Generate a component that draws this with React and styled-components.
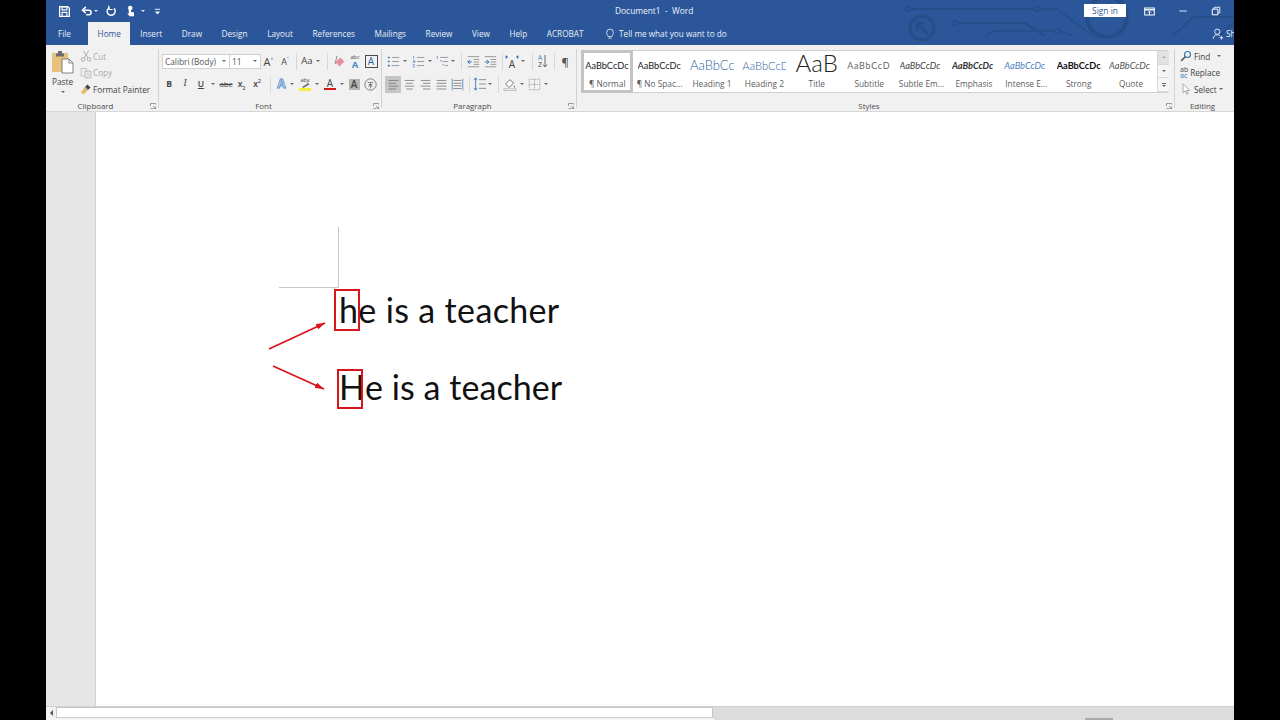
import React from 'react';
import styled, { createGlobalStyle } from 'styled-components';

const GlobalStyle = createGlobalStyle`
  html, body { margin: 0; padding: 0; background: #000; }
  body { font-family: "Open Sans", "Noto Sans", sans-serif; overflow: hidden; }
`;

const Window = styled.div`
  width: 1188px;
  height: 720px;
  margin-left: 46px;
  display: flex;
  flex-direction: column;
  overflow: hidden;
  background: #fff;
`;

// Header
const Header = styled.header`
  position: relative;
  flex: 0 0 45px;
  background: #2b579a;
  color: #eef2f8;
`;

const Circuit = styled.svg`
  position: absolute;
  right: 0;
  top: 0;
  width: 334px;
  height: 46px;
  pointer-events: none;
`;

const TitleBar = styled.div`
  position: relative;
  height: 22px;
  display: flex;
  align-items: center;
`;

const Qat = styled.div`
  flex: 0 0 569px;
  display: flex;
  align-items: center;
  padding-left: 12px;
  box-sizing: border-box;
`;

const DocTitle = styled.div`
  font-size: 8.4px;
  margin-top: -2px;
  white-space: pre;
`;

const WinControls = styled.div`
  margin-left: auto;
  display: flex;
  align-items: center;
  padding-right: 2px;
`;

const SignIn = styled.div`
  width: 42px;
  height: 13px;
  margin-top: -1px;
  margin-right: 7px;
  background: #fff;
  color: #2b579a;
  font-size: 8.4px;
  line-height: 13px;
  text-align: center;
`;

const TabBar = styled.nav`
  position: relative;
  height: 23px;
  display: flex;
  align-items: stretch;
`;

const Tab = styled.div`
  padding: 0 9.8px;
  box-sizing: border-box;
  display: flex;
  align-items: center;
  justify-content: center;
  font-size: 8.2px;
  white-space: nowrap;
  background: ${p => (p.$active ? '#f1f1f1' : 'transparent')};
  color: ${p => (p.$active ? '#2b579a' : '#e8eef7')};
`;

const FileTab = styled(Tab)`
  flex: 0 0 42px;
  padding: 0 0 0 12px;
  justify-content: flex-start;
`;

const HomeTab = styled(Tab)`
  padding: 0 9.6px;
`;

const TellMe = styled(Tab)`
  margin-left: 1px;
  gap: 3px;
`;

const Share = styled.div`
  margin-left: auto;
  margin-right: -14px;
  display: flex;
  align-items: center;
  gap: 2px;
  font-size: 8.2px;
`;

// Ribbon
const Ribbon = styled.section`
  flex: 0 0 67px;
  display: flex;
  background: #f1f1f1;
  border-bottom: 1px solid #d6d6d6;
  box-sizing: border-box;
  color: #444;
`;

const Group = styled.div`
  flex: 0 0 ${p => p.$w}px;
  box-sizing: border-box;
  display: flex;
  flex-direction: column;
  position: relative;
  &::after {
    content: '';
    position: absolute;
    right: 0;
    top: 4px;
    bottom: 3px;
    width: 1px;
    background: ${p => (p.$last ? 'transparent' : '#d2d2d2')};
  }
`;

const GroupBody = styled.div`
  height: 55px;
  box-sizing: border-box;
  padding: ${p => p.$pad || '8.5px 0 0 3px'};
  display: flex;
  flex-direction: ${p => p.$dir || 'column'};
`;

const GroupFoot = styled.div`
  height: 11px;
  position: relative;
  font-size: 7.9px;
  line-height: 13px;
  text-align: center;
  padding-right: ${p => (p.$noLauncher ? 4 : 14)}px;
  color: #4c4c4c;
`;

const Launcher = styled.svg`
  position: absolute;
  right: 3px;
  top: 3px;
  width: 6px;
  height: 6px;
`;

const ToolRow = styled.div`
  display: flex;
  align-items: center;
  height: 15px;
  margin-bottom: 8px;
`;

const Slot = styled.div`
  flex: 0 0 ${p => p.$w}px;
  height: ${p => (p.$on ? 17 : 15)}px;
  display: flex;
  align-items: center;
  justify-content: center;
  position: relative;
  background: ${p => (p.$on ? '#c6c6c6' : 'transparent')};
`;

const Divider = styled.div`
  flex: 0 0 ${p => p.$w}px;
  height: 17px;
  display: flex;
  justify-content: center;
  &::before {
    content: '';
    width: 1px;
    background: #d8d8d8;
  }
`;

const Caret = styled.span`
  display: block;
  width: 0;
  height: 0;
  border-left: 2px solid transparent;
  border-right: 2px solid transparent;
  border-top: 2px solid #666;
`;

const CaretUp = styled(Caret)`
  border-top: 0;
  border-bottom: 2px solid #aaa;
`;

const QatCaret = styled(Caret)`
  border-top-color: #e8eef7;
`;

const Glyph = styled.span`
  font-family: ${p => (p.$serif ? '"Liberation Serif", serif' : '"Open Sans", sans-serif')};
  font-size: ${p => p.$size || 9}px;
  font-weight: ${p => p.$weight || 400};
  font-style: ${p => (p.$italic ? 'italic' : 'normal')};
  text-decoration: ${p => p.$deco || 'none'};
  color: ${p => p.$color || '#444'};
  line-height: 1;
  white-space: nowrap;
`;

const GlyphStack = styled.span`
  display: flex;
  flex-direction: column;
  align-items: ${p => p.$align || 'center'};
  line-height: 1;
`;

const TinyLine = styled(Glyph)`
  height: ${p => p.$h || 6}px;
  line-height: ${p => p.$h || 6}px;
`;

const SupMark = styled.span`
  font-size: 5px;
  vertical-align: super;
  line-height: 0;
`;

const SubMark = styled.span`
  font-size: 5px;
  vertical-align: sub;
  line-height: 0;
`;

const OutlineA = styled(Glyph)`
  color: #cfe0f5;
  -webkit-text-stroke: 0.8px #5b8fd2;
  font-weight: 700;
`;

const BarA = styled.span`
  display: flex;
  flex-direction: column;
  align-items: center;
  line-height: 1;
  font-size: ${p => p.$size || 10}px;
  color: #444;
  &::after {
    content: '';
    width: ${p => p.$bar || 12}px;
    height: 2.5px;
    background: ${p => p.$color};
  }
`;

const ShadedA = styled.span`
  width: 11px;
  height: 11px;
  background: #b4b4b4;
  font-size: 10px;
  font-weight: 600;
  line-height: 11px;
  text-align: center;
  color: #444;
`;

const BoxedA = styled.span`
  width: 11px;
  height: 11px;
  border: 1px solid #4a4a4a;
  font-size: 10px;
  line-height: 11px;
  text-align: center;
  color: #2b6aa8;
`;

const FontBox = styled.div`
  flex: 0 0 ${p => p.$w}px;
  box-sizing: border-box;
  height: 15px;
  background: #fff;
  border: 1px solid #d0d0d0;
  margin-right: -1px;
  display: flex;
  align-items: center;
  justify-content: space-between;
  padding: 0 3px 0 2px;
  font-size: 8.4px;
  letter-spacing: -0.05px;
  white-space: nowrap;
  color: #555;
`;

// Clipboard
const PasteCol = styled.div`
  flex: 0 0 31px;
  margin: 2px 0 0 1px;
  display: flex;
  flex-direction: column;
  align-items: center;
  font-size: 8.3px;
  color: #444;
`;

const PasteLabel = styled.div`
  margin-top: 2px;
  line-height: 12px;
`;

const PasteCaret = styled(Caret)`
  margin-top: 3px;
`;

const ActionStack = styled.div`
  display: flex;
  flex-direction: column;
  padding-left: ${p => p.$left || 0}px;
`;

const Action = styled.div`
  height: 16.5px;
  display: flex;
  align-items: center;
  gap: ${p => p.$gap || 1}px;
  font-size: 8.2px;
  white-space: nowrap;
  color: ${p => (p.$off ? '#aaa' : '#444')};
`;

// Styles gallery
const Gallery = styled.div`
  display: flex;
  height: 43px;
  box-sizing: border-box;
  border: 1px solid #cfcfcf;
  border-left: 0;
  background: #fff;
  width: 587px;
`;

const Tiles = styled.div`
  flex: 1;
  display: flex;
`;

const Tile = styled.div`
  flex: 0 0 52.4px;
  box-sizing: border-box;
  display: flex;
  flex-direction: column;
  align-items: center;
  border: ${p => (p.$selected ? '3px solid #c4c4c4' : 'none')};
  margin-top: ${p => (p.$selected ? -1 : 0)}px;
  margin-bottom: ${p => (p.$selected ? -1 : 0)}px;
  padding-top: ${p => (p.$selected ? 0 : 2)}px;
`;

const Preview = styled.div`
  width: 44px;
  height: 24px;
  box-sizing: border-box;
  padding-bottom: ${p => p.$lift || 0}px;
  overflow: hidden;
  display: flex;
  align-items: center;
  justify-content: ${p => (p.$center ? 'center' : 'flex-start')};
  white-space: nowrap;
  font-family: Lato, "Liberation Sans", sans-serif;
  font-size: ${p => p.$size || 9.2}px;
  font-weight: ${p => p.$weight || 400};
  font-style: ${p => (p.$italic ? 'italic' : 'normal')};
  letter-spacing: ${p => p.$spacing || 0}px;
  color: ${p => p.$color || '#222'};
`;

const TileLabel = styled.div`
  margin-top: 1px;
  font-size: 8.3px;
  line-height: 12px;
  color: #5c5c5c;
  white-space: nowrap;
`;

const Scroller = styled.div`
  flex: 0 0 11px;
  display: flex;
  flex-direction: column;
  border-left: 1px solid #d8d8d8;
  background: #f3f3f3;
`;

const ScrollBtn = styled.div`
  flex: 1;
  display: flex;
  align-items: center;
  justify-content: center;
  flex-direction: column;
  gap: 1px;
  background: ${p => (p.$off ? '#e2e2e2' : '#f6f6f6')};
  border-bottom: 1px solid #d8d8d8;
`;

const ScrollDash = styled.span`
  width: 4px;
  height: 1px;
  background: #666;
`;

// Document
const Workspace = styled.main`
  flex: 1;
  display: flex;
  min-height: 0;
`;

const Gutter = styled.div`
  flex: 0 0 49px;
  background: #e6e6e6;
  border-right: 1px solid #d4d4d4;
`;

const Page = styled.div`
  position: relative;
  flex: 1;
  background: #fff;
  padding-top: 115px;
`;

const CropMark = styled.div`
  width: 60px;
  height: 61px;
  margin-left: 183px;
  box-sizing: border-box;
  border-right: 1px solid #c8c8c8;
  border-bottom: 1px solid #c8c8c8;
`;

const Lines = styled.div`
  margin-left: 243px;
  display: flex;
  flex-direction: column;
  gap: 34px;
`;

const Line = styled.div`
  height: 43px;
  line-height: 43px;
  font-family: Lato, "Liberation Sans", sans-serif;
  font-size: 34px;
  letter-spacing: ${p => p.$track}px;
  color: #111;
  white-space: pre;
`;

const Marked = styled.span`
  position: relative;
  &::after {
    content: '';
    position: absolute;
    left: ${p => p.$left}px;
    top: ${p => p.$top}px;
    width: 26px;
    height: ${p => p.$h}px;
    box-sizing: border-box;
    border: 2px solid #d8141c;
  }
`;

const Arrows = styled.svg`
  position: absolute;
  left: 0;
  top: 0;
  width: 300px;
  height: 300px;
  overflow: visible;
`;

// Bottom
const HScroll = styled.div`
  flex: 0 0 12px;
  display: flex;
  background: #dcdcdc;
  border-top: 1px solid #d0d0d0;
  box-sizing: border-box;
`;

const LeftBtn = styled.div`
  flex: 0 0 10px;
  background: #f1f1f1;
  display: flex;
  align-items: center;
  justify-content: center;
`;

const LeftTri = styled.span`
  width: 0;
  height: 0;
  border-top: 3px solid transparent;
  border-bottom: 3px solid transparent;
  border-right: 3px solid #555;
`;

const Thumb = styled.div`
  flex: 0 0 657px;
  box-sizing: border-box;
  background: #fff;
  border: 1px solid #c8c8c8;
`;

const StatusEdge = styled.div`
  flex: 0 0 2px;
  display: flex;
  background: #dcdcdc;
`;

const EdgeLight = styled.div`
  flex: 0 0 668px;
  background: #f4f4f4;
`;

const EdgeBlob = styled.div`
  flex: 0 0 28px;
  margin-left: 371px;
  background: #aaa;
`;

const Ico = ({ s = 14, w, h, children, vb = '0 0 16 16' }) => (
  <svg width={w || s} height={h || s} viewBox={vb} fill="none" style={{ display: 'block', flex: 'none' }}>
    {children}
  </svg>
);

const SaveIcon = () => (
  <Ico s={13}>
    <path d="M2 2h10l2 2v10H2z" stroke="#fff" strokeWidth="1.6" />
    <path d="M5 2.500h6v3.500H5zM5 14V9h6v5" stroke="#fff" strokeWidth="1.4" />
  </Ico>
);
const UndoIcon = () => (
  <Ico s={12}>
    <path d="M3 7h7.500a3 3 0 0 1 0 6H7" stroke="#fff" strokeWidth="2" />
    <path d="M6.500 2.500 2 7l4.500 4" stroke="#fff" strokeWidth="2" />
  </Ico>
);
const RedoIcon = () => (
  <Ico s={12}>
    <path d="M6 3.400A5.400 5.400 0 1 0 12 4.500" stroke="#fff" strokeWidth="1.9" />
    <path d="M5 1v5h5" stroke="#fff" strokeWidth="1.6" />
  </Ico>
);
const TouchIcon = () => (
  <Ico s={12}>
    <circle cx="7" cy="4" r="3" fill="#fff" />
    <path d="M5 6h3v3l4 1v5H6l-3-4 2 .5z" fill="#fff" />
  </Ico>
);
const CustomizeIcon = () => (
  <Ico s={7} vb="0 0 8 8">
    <path d="M1 1.500h6" stroke="#fff" />
    <path d="M1 4h6L4 7.500z" fill="#fff" />
  </Ico>
);
const RibbonDisplayIcon = () => (
  <Ico s={11}>
    <path d="M1 3h14v10H1z" stroke="#fff" strokeWidth="1.5" />
    <path d="M1 5.500h14" stroke="#fff" strokeWidth="2" />
    <path d="M8 13V8M5.800 9.600 8 7.400l2.200 2.200" stroke="#fff" strokeWidth="1.4" />
  </Ico>
);
const MinimizeIcon = () => (
  <Ico s={10}>
    <path d="M2 8h12" stroke="#dfe7f3" strokeWidth="1.6" />
  </Ico>
);
const RestoreIcon = () => (
  <Ico s={10}>
    <path d="M2 5h9v9H2z" stroke="#fff" strokeWidth="1.6" />
    <path d="M5 5V2h9v9h-3" stroke="#fff" strokeWidth="1.4" />
  </Ico>
);
const BulbIcon = () => (
  <Ico s={12}>
    <path d="M5.500 11.500C5 9.500 3.500 8.500 3.500 6a4.500 4.500 0 0 1 9 0c0 2.500-1.500 3.500-2 5.500z" stroke="#fff" strokeWidth="1" />
    <path d="M6 13.500h4" stroke="#fff" strokeWidth="1" />
  </Ico>
);
const PersonIcon = () => (
  <Ico s={12}>
    <circle cx="7" cy="5" r="3.500" stroke="#fff" strokeWidth="1.100" />
    <path d="M1.500 14.500c.5-3.500 2.500-5.500 5.500-5.500 1.500 0 2.500.4 3.500 1.300M12.500 10.500v5M10 13h5" stroke="#fff" strokeWidth="1.100" />
  </Ico>
);

const PasteIcon = () => (
  <Ico w={24} h={24} vb="0 0 24 24">
    <rect x="1" y="3" width="16" height="19" fill="#e7c27d" />
    <path d="M5 3.500h8v3H5z" fill="#6b6b6b" />
    <rect x="7" y="1" width="4" height="3" fill="#6b6b6b" />
    <path d="M11 9h7l4 4v10H11z" fill="#fff" stroke="#666" strokeWidth=".8" />
    <path d="M18 9v4h4" stroke="#666" strokeWidth=".8" />
  </Ico>
);
const ScissorsIcon = () => (
  <Ico s={12}>
    <circle cx="4" cy="12.500" r="2.400" stroke="#aaa" strokeWidth="1.200" />
    <circle cx="12" cy="12.500" r="2.400" stroke="#aaa" strokeWidth="1.200" />
    <path d="M5.500 10.500 11.500 1M10.500 10.500 4.500 1" stroke="#aaa" strokeWidth="1.200" />
  </Ico>
);
const CopyIcon = () => (
  <Ico s={12}>
    <path d="M1.500 2h7v10h-7z" stroke="#b4b4b4" strokeWidth="1" />
    <path d="M6.500 5.500h8v9h-8z" fill="#f1f1f1" stroke="#aaa" strokeWidth="1" />
    <path d="M8.500 8h4M8.500 10h4M8.500 12h4" stroke="#bbb" strokeWidth=".8" />
  </Ico>
);
const BrushIcon = () => (
  <Ico s={12}>
    <path d="M1 13 6 6l4 4-5 5z" fill="#e9b96a" />
    <path d="m7 5 3-3 4 4-3 3z" fill="#444" />
    <path d="m6 6 1-1 4 4-1 1z" fill="#888" />
  </Ico>
);
const EraserIcon = () => (
  <Ico s={13}>
    <path d="m3 9 6-6 5 5-6 6z" fill="#ea8fa2" />
    <path d="M5 1 2.500 11" stroke="#777" strokeWidth="1" />
  </Ico>
);
const AlertCircle = () => (
  <Ico s={13}>
    <circle cx="8" cy="8" r="7" stroke="#666" strokeWidth="1" />
    <path d="M4.500 5.500h7M5.500 8h5M8 5.500V13M5.500 11 8 8l2.500 3" stroke="#666" strokeWidth=".9" />
  </Ico>
);
const HighlightMark = () => (
  <Ico w={14} h={8} vb="0 0 14 8">
    <path d="m4 4 6-4 1.500 1.500L5.500 5z" fill="#777" />
    <rect x="1" y="5" width="12" height="3" fill="#f5ee3a" />
  </Ico>
);
const Lines4 = ({ spec, color = '#777' }) => (
  <Ico s={13}>
    {spec.map(([x1, x2, y], i) => (
      <path key={i} d={`M${x1} ${y}H${x2}`} stroke={color} strokeWidth="1" />
    ))}
  </Ico>
);
const BulletsIcon = () => (
  <Ico s={13}>
    <path d="M6 3h9M6 8h9M6 13h9" stroke="#888" />
    <path d="M1 2h2.500v2H1zM1 7h2.500v2H1zM1 12h2.500v2H1z" fill="#4a7fbf" />
  </Ico>
);
const NumberedIcon = () => (
  <Ico s={13}>
    <path d="M6 3h9M6 8h9M6 13h9" stroke="#888" />
    <path d="M2 1.500v3M1 7h2.500v2H1M1 12h2.500M1 14.500h2.500" stroke="#4a7fbf" />
  </Ico>
);
const MultiIcon = () => (
  <Ico s={13}>
    <path d="M5 3h10M8 8h7M11 13h4" stroke="#888" />
    <path d="M1.500 1.500v3M5 7h2M8 12h2" stroke="#4a7fbf" />
  </Ico>
);
const IndentIcon = ({ flip }) => (
  <Ico s={13}>
    <path d="M1 2h14M8 5.500h7M8 8.500h7M8 11.500h7M1 14.500h14" stroke="#888" />
    <path d={flip ? 'M1 8.500h5M3.500 6 6 8.500 3.500 11' : 'M6 8.500H1M3.500 6 1 8.500 3.500 11'} stroke="#2d6fb7" strokeWidth="1.200" />
  </Ico>
);
const SparkMarks = () => (
  <Ico w={16} h={6} vb="0 0 16 6">
    <path d="M1 3h3M2.500 1.500v3M12 3h3M13.500 1.500v3" stroke="#3f76c0" />
  </Ico>
);
const DownArrow = () => (
  <Ico w={6} h={14} vb="0 0 6 14">
    <path d="M3 1v12M.8 10.500 3 13l2.200-2.500" stroke="#666" strokeWidth="1" />
  </Ico>
);
const DistributeIcon = () => (
  <Ico s={13}>
    <path d="M1.500 1v14M14.500 1v14" stroke="#4a7fbf" />
    <path d="M3 3h10M3 6.500h10M3 9.500h10M3 13h10" stroke="#777" />
  </Ico>
);
const SpacingIcon = () => (
  <Ico s={14}>
    <path d="M7 3h8M7 8h8M7 13h8" stroke="#888" />
    <path d="M3 1v14M1 3.500 3 1l2 2.500M1 12.500 3 15l2-2.500" stroke="#3f76c0" />
  </Ico>
);
const ShadingIcon = () => (
  <Ico s={14}>
    <path d="m3 8 5-5 4 4-5 5z" fill="#fff" stroke="#666" />
    <path d="M13 9.500c1 1.500 1 2.500 0 2.500s-1-1 0-2.500z" fill="#3f76c0" />
    <path d="M1 13.500h14v2H1z" fill="#fff" stroke="#999" strokeWidth=".7" />
  </Ico>
);
const BordersIcon = () => (
  <Ico s={13}>
    <path d="M1.500 1.500h13v13h-13zM8 1.500v13M1.500 8h13" stroke="#999" strokeDasharray="1.400 1" />
  </Ico>
);
const FindIcon = () => (
  <Ico s={12}>
    <circle cx="10" cy="6" r="4" stroke="#3a6fa8" strokeWidth="1.500" />
    <path d="M7 9 1.500 14.500" stroke="#555" strokeWidth="2" />
  </Ico>
);
const SelectIcon = () => (
  <Ico s={12}>
    <path d="M4 1v12l3-2.500 2 4.500 1.800-.8-2-4.200H13z" fill="#fff" stroke="#888" strokeWidth=".9" />
  </Ico>
);
const LauncherIcon = () => (
  <Launcher viewBox="0 0 6 6">
    <path d="M.5 3V.5h5v1M.5 5.500H3M5.500 5.500 3 3M5.500 3.500v2h-2" stroke="#777" strokeWidth=".7" fill="none" />
  </Launcher>
);

const Circuitry = () => (
  <Circuit viewBox="900 0 334 46" fill="none" stroke="#264d89" strokeWidth="1.500">
    <circle cx="908" cy="9" r="2.500" />
    <path d="M911 9h123" strokeWidth="2" />
    <circle cx="1037" cy="9" r="2.500" />
    <path d="M1040 9h17l36 27" />
    <circle cx="955" cy="23" r="2.500" />
    <path d="M958 23h67l20 13" strokeWidth="2" />
    <path d="m985 36 8-5h61" />
    <circle cx="1057" cy="31" r="2.500" />
    <path d="m1060 31 13 5" />
    <circle cx="922" cy="28" r="12" strokeWidth="3" />
    <path d="M928 34 917 23M917 31v-8h8" strokeWidth="3" />
    <circle cx="1107" cy="17" r="20" strokeWidth="4" />
    <path d="m1173 36 20-19h40M1220 36l13-13" strokeWidth="2" />
  </Circuit>
);

const tabs = ['Insert', 'Draw', 'Design', 'Layout', 'References', 'Mailings', 'Review', 'View', 'Help', 'ACROBAT'];

const galleryItems = [
  { name: '¶ Normal', text: 'AaBbCcDc', selected: true, color: '#222' },
  { name: '¶ No Spac...', text: 'AaBbCcDc', color: '#222' },
  { name: 'Heading 1', text: 'AaBbCc', color: '#2f5f9e', size: 13, weight: 300 },
  { name: 'Heading 2', text: 'AaBbCcD', color: '#2f5f9e', size: 11.2, weight: 300 },
  { name: 'Title', text: 'AaB', color: '#222', size: 24, weight: 300, center: true, lift: 5 },
  { name: 'Subtitle', text: 'AaBbCcD', color: '#666', size: 9, spacing: 0.7 },
  { name: 'Subtle Em...', text: 'AaBbCcDc', color: '#444', italic: true },
  { name: 'Emphasis', text: 'AaBbCcDc', color: '#333', italic: true, weight: 700 },
  { name: 'Intense E...', text: 'AaBbCcDc', color: '#4a7fbf', italic: true },
  { name: 'Strong', text: 'AaBbCcDc', color: '#111', weight: 700 },
  { name: 'Quote', text: 'AaBbCcDc', color: '#555', italic: true },
];

const App = () => (
  <>
    <GlobalStyle />
    <Window>
      <Header>
        <Circuitry />
        <TitleBar>
          <Qat>
            <SaveIcon />
            <Slot $w={10} />
            <UndoIcon />
            <Slot $w={6}><QatCaret /></Slot>
            <Slot $w={6} />
            <RedoIcon />
            <Slot $w={8} />
            <TouchIcon />
            <Slot $w={12}><QatCaret /></Slot>
            <Slot $w={5} />
            <CustomizeIcon />
          </Qat>
          <DocTitle>Document1  -  Word</DocTitle>
          <WinControls>
            <SignIn>Sign in</SignIn>
            <Slot $w={33}><RibbonDisplayIcon /></Slot>
            <Slot $w={33}><MinimizeIcon /></Slot>
            <Slot $w={33}><RestoreIcon /></Slot>
          </WinControls>
        </TitleBar>
        <TabBar>
          <FileTab>File</FileTab>
          <HomeTab $active>Home</HomeTab>
          {tabs.map(t => <Tab key={t}>{t}</Tab>)}
          <TellMe><BulbIcon />Tell me what you want to do</TellMe>
          <Share><PersonIcon />Share</Share>
        </TabBar>
      </Header>

      <Ribbon>
        <Group $w={113}>
          <GroupBody $dir="row" $pad="3px 0 0 0">
            <PasteCol>
              <PasteIcon />
              <PasteLabel>Paste</PasteLabel>
              <PasteCaret />
            </PasteCol>
            <ActionStack $left={2}>
              <Action $off><ScissorsIcon />Cut</Action>
              <Action $off><CopyIcon />Copy</Action>
              <Action><BrushIcon />Format Painter</Action>
            </ActionStack>
          </GroupBody>
          <GroupFoot>Clipboard<LauncherIcon /></GroupFoot>
        </Group>

        <Group $w={223}>
          <GroupBody>
            <ToolRow>
              <FontBox $w={68}>Calibri (Body)<Caret /></FontBox>
              <FontBox $w={32}>11<Caret /></FontBox>
              <Slot $w={17}><Glyph $size={11}>A<SupMark>^</SupMark></Glyph></Slot>
              <Slot $w={16}><Glyph $size={9}>A<SupMark>ˇ</SupMark></Glyph></Slot>
              <Divider $w={6} />
              <Slot $w={16}><Glyph $size={9.5}>Aa</Glyph></Slot>
              <Slot $w={6}><Caret /></Slot>
              <Divider $w={12} />
              <Slot $w={11}><EraserIcon /></Slot>
              <Slot $w={18}>
                <GlyphStack>
                  <TinyLine $size={5.5} $h={6}>abc</TinyLine>
                  <TinyLine $size={9.5} $h={9} $weight={700} $color="#4a86c8">A</TinyLine>
                </GlyphStack>
              </Slot>
              <Slot $w={14}><BoxedA>A</BoxedA></Slot>
            </ToolRow>
            <ToolRow>
              <Slot $w={14}><Glyph $weight={700} $size={8.5}>B</Glyph></Slot>
              <Slot $w={18}><Glyph $italic $serif $size={9.5}>I</Glyph></Slot>
              <Slot $w={14}><Glyph $deco="underline" $size={8.5} $weight={600}>U</Glyph></Slot>
              <Slot $w={10}><Caret /></Slot>
              <Slot $w={16}><Glyph $deco="line-through" $size={8}>abc</Glyph></Slot>
              <Slot $w={15}><Glyph $size={8.5} $weight={600}>x<SubMark>2</SubMark></Glyph></Slot>
              <Slot $w={16}><Glyph $size={8.5} $weight={600}>x<SupMark>2</SupMark></Glyph></Slot>
              <Divider $w={10} />
              <Slot $w={13}><OutlineA $size={12}>A</OutlineA></Slot>
              <Slot $w={8}><Caret /></Slot>
              <Slot $w={18}>
                <GlyphStack>
                  <TinyLine $size={5.5} $h={6}>aby</TinyLine>
                  <HighlightMark />
                </GlyphStack>
              </Slot>
              <Slot $w={6}><Caret /></Slot>
              <Slot $w={20}><BarA $color="#d11a1a">A</BarA></Slot>
              <Slot $w={4}><Caret /></Slot>
              <Slot $w={20}><ShadedA>A</ShadedA></Slot>
              <Slot $w={12}><AlertCircle /></Slot>
            </ToolRow>
          </GroupBody>
          <GroupFoot>Font<LauncherIcon /></GroupFoot>
        </Group>

        <Group $w={195}>
          <GroupBody>
            <ToolRow>
              <Slot $w={16}><BulletsIcon /></Slot>
              <Slot $w={8}><Caret /></Slot>
              <Slot $w={18}><NumberedIcon /></Slot>
              <Slot $w={6}><Caret /></Slot>
              <Slot $w={18}><MultiIcon /></Slot>
              <Slot $w={4}><Caret /></Slot>
              <Divider $w={12} />
              <Slot $w={12}><IndentIcon /></Slot>
              <Slot $w={20}><IndentIcon flip /></Slot>
              <Divider $w={4} />
              <Slot $w={16}>
                <GlyphStack>
                  <SparkMarks />
                  <TinyLine $size={10} $h={8}>A</TinyLine>
                </GlyphStack>
              </Slot>
              <Slot $w={6}><Caret /></Slot>
              <Divider $w={12} />
              <Slot $w={10}>
                <GlyphStack>
                  <TinyLine $size={6.5} $h={7} $color="#4a7fbf">A</TinyLine>
                  <TinyLine $size={6.5} $h={7}>Z</TinyLine>
                </GlyphStack>
                <DownArrow />
              </Slot>
              <Divider $w={12} />
              <Slot $w={10}><Glyph $size={11} $weight={600} $color="#555">¶</Glyph></Slot>
            </ToolRow>
            <ToolRow>
              <Slot $w={16} $on><Lines4 spec={[[2, 14, 3], [2, 11, 6.5], [2, 14, 10], [2, 11, 13.5]]} /></Slot>
              <Slot $w={16}><Lines4 spec={[[2, 14, 3], [4, 12, 6.5], [2, 14, 10], [4, 12, 13.5]]} /></Slot>
              <Slot $w={16}><Lines4 spec={[[2, 14, 3], [5, 14, 6.5], [2, 14, 10], [5, 14, 13.5]]} /></Slot>
              <Slot $w={16}><Lines4 spec={[[2, 14, 3], [2, 14, 6.5], [2, 14, 10], [2, 14, 13.5]]} /></Slot>
              <Slot $w={16}><DistributeIcon /></Slot>
              <Divider $w={8} />
              <Slot $w={14}><SpacingIcon /></Slot>
              <Slot $w={6}><Caret /></Slot>
              <Divider $w={10} />
              <Slot $w={14}><ShadingIcon /></Slot>
              <Slot $w={10}><Caret /></Slot>
              <Slot $w={14}><BordersIcon /></Slot>
              <Slot $w={10}><Caret /></Slot>
            </ToolRow>
          </GroupBody>
          <GroupFoot>Paragraph<LauncherIcon /></GroupFoot>
        </Group>

        <Group $w={598}>
          <GroupBody $pad="5px 0 0 4px">
            <Gallery>
              <Tiles>
                {galleryItems.map(it => (
                  <Tile key={it.name} $selected={it.selected}>
                    <Preview
                      $color={it.color}
                      $size={it.size}
                      $weight={it.weight}
                      $italic={it.italic}
                      $spacing={it.spacing}
                      $center={it.center}
                      $lift={it.lift}
                    >
                      {it.text}
                    </Preview>
                    <TileLabel>{it.name}</TileLabel>
                  </Tile>
                ))}
              </Tiles>
              <Scroller>
                <ScrollBtn $off><CaretUp /></ScrollBtn>
                <ScrollBtn><Caret /></ScrollBtn>
                <ScrollBtn><ScrollDash /><Caret /></ScrollBtn>
              </Scroller>
            </Gallery>
          </GroupBody>
          <GroupFoot>Styles<LauncherIcon /></GroupFoot>
        </Group>

        <Group $w={59} $last>
          <GroupBody $pad="3px 0 0 5px">
            <ActionStack>
              <Action $gap={2}><FindIcon />Find&nbsp;&nbsp;<Caret /></Action>
              <Action $gap={2}>
                <GlyphStack $align="flex-start">
                  <TinyLine $size={7} $h={6}>ab</TinyLine>
                  <TinyLine $size={7} $h={6} $color="#2d6fb7">ac</TinyLine>
                </GlyphStack>
                Replace
              </Action>
              <Action $gap={2}><SelectIcon />Select<Caret /></Action>
            </ActionStack>
          </GroupBody>
          <GroupFoot $noLauncher>Editing</GroupFoot>
        </Group>
      </Ribbon>

      <Workspace>
        <Gutter />
        <Page>
          <CropMark />
          <Lines>
            <Line $track={0.35}><Marked $left={-5} $top={0} $h={42}>h</Marked>e is a teacher</Line>
            <Line $track={0.06}><Marked $left={-2} $top={3} $h={40}>H</Marked>e is a teacher</Line>
          </Lines>
          <Arrows>
            <defs>
              <marker id="head" markerUnits="userSpaceOnUse" markerWidth="9" markerHeight="6" refX="9" refY="3" orient="auto">
                <path d="M0 0 9 3 0 6z" fill="#d8141c" />
              </marker>
            </defs>
            <path d="M173 237 229 211" stroke="#d8141c" strokeWidth="1.8" markerEnd="url(#head)" />
            <path d="M177 254 228 277" stroke="#d8141c" strokeWidth="1.8" markerEnd="url(#head)" />
          </Arrows>
        </Page>
      </Workspace>

      <HScroll>
        <LeftBtn><LeftTri /></LeftBtn>
        <Thumb />
      </HScroll>
      <StatusEdge>
        <EdgeLight />
        <EdgeBlob />
      </StatusEdge>
    </Window>
  </>
);

export default App;
